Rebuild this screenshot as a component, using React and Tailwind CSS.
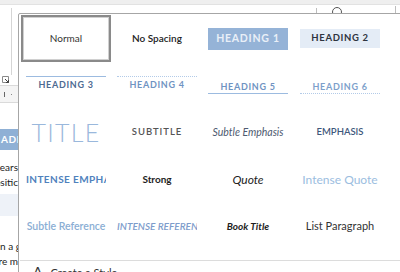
import React from 'react';

const font = { fontFamily: 'Lato, "Open Sans", sans-serif' };

function Cell({ children, className = '' }) {
  return (
    <div className={`h-[47px] flex items-center justify-center overflow-hidden ${className}`}>
      {children}
    </div>
  );
}

export default function App() {
  return (
    <div className="relative w-[400px] h-[272px] overflow-hidden bg-white text-[#333]" style={font}>
      {/* document behind the gallery */}
      <div className="flex flex-col w-full">
        <div className="h-[5px] bg-[#efefef] border-b border-[#e2e2e2]" />
        <div className="h-[80px] relative w-[18px]">
          <div className="absolute left-[11px] top-[3px] h-[67px] w-px bg-[#d5d5d5]" />
          <svg className="absolute left-[2px] top-[71px]" width="8" height="8" viewBox="0 0 8 8">
            <path d="M0.5 0.5h6v6h-6z" fill="none" stroke="#8a8a8a" strokeWidth="1" />
            <path d="M3 3l3.5 3.5M4 6.5h2.5V4" fill="none" stroke="#444" strokeWidth="1" />
          </svg>
        </div>
        <div className="h-[18px] w-[18px] border-y border-[#dadada] bg-[#f4f4f4] flex items-center gap-[6px] pl-[4px]">
          <div className="w-px h-[5px] bg-[#666]" />
          <div className="w-px h-px bg-[#888]" />
        </div>
        <div className="w-[18px] overflow-hidden text-[10px] leading-[15px] text-[#222] whitespace-nowrap">
          <div className="h-[26px]" />
          <div className="h-[21px] bg-[#8fb0d5] text-white font-bold tracking-wider flex items-center pl-[1px]">ADI</div>
          <div className="h-[10px]" />
          <div className="flex justify-end">years</div>
          <div className="flex justify-end">positic</div>
          <div className="h-[4px]" />
          <div className="h-[22px] bg-[#eef2f8]" />
          <div className="h-[23px]" />
          <div>n a g</div>
          <div className="flex justify-end">are m</div>
        </div>
      </div>

      {/* ribbon bits above the gallery */}
      <div className="absolute left-[316px] top-[8px] w-px h-[5px] bg-[#bdbdbd]" />
      <div className="absolute left-[332px] top-[7px] w-[10px] h-[10px] rounded-full border border-[#555]" />
      <div className="absolute left-[395px] top-[6px] w-px h-[7px] bg-[#bdbdbd]" />

      {/* styles gallery */}
      <div className="absolute left-[18px] top-[13px] w-[400px] h-[270px] bg-white border border-[#a6a6a6] rounded-tl-[2px] pl-px pt-px">
        <div className="grid grid-cols-[92px_90px_92px_92px] w-[366px]">
          <Cell>
            <div className="w-[90px] h-[47px] border-2 border-[#8a8a8a] shadow-[inset_0_0_0_1px_#d0d0d0] flex items-center justify-center text-[10px] text-[#333]">Normal</div>
          </Cell>
          <Cell><span className="text-[10px] font-semibold text-[#222]">No Spacing</span></Cell>
          <Cell>
            <div className="w-[80px] h-[22px] bg-[#95b3d7] flex items-center justify-center text-[10.5px] font-bold tracking-[0.07em] text-[#e9eff7]">HEADING 1</div>
          </Cell>
          <Cell>
            <div className="w-[80px] h-[19px] bg-[#e4ecf6] flex items-center justify-center text-[9.5px] font-bold tracking-[0.07em] text-[#2e3440]">HEADING 2</div>
          </Cell>

          <Cell>
            <div className="w-[80px] border-t border-[#9cbbe0] pt-[1px] text-center text-[9px] font-bold tracking-[0.08em] text-[#4d6a91] mt-[-4px]">HEADING 3</div>
          </Cell>
          <Cell>
            <div className="w-[80px] border-t border-dotted border-[#b3cbe8] pt-[1px] text-center text-[9px] font-bold tracking-[0.08em] text-[#6f93c2] mt-[-4px]">HEADING 4</div>
          </Cell>
          <Cell>
            <div className="w-[80px] border-b border-[#9cbbe0] pb-0 text-center text-[9px] font-bold tracking-[0.08em] text-[#6f93c2] mt-[3px]">HEADING 5</div>
          </Cell>
          <Cell>
            <div className="w-[80px] border-b border-dotted border-[#b3cbe8] pb-0 text-center text-[9px] font-bold tracking-[0.08em] text-[#7d9fcb] mt-[3px]">HEADING 6</div>
          </Cell>

          <Cell><span className="text-[25px] font-light tracking-[0.05em] text-[#9ab8dc] leading-none">TITLE</span></Cell>
          <Cell><span className="text-[9.5px] font-semibold tracking-[0.1em] text-[#555]">SUBTITLE</span></Cell>
          <Cell><span className="text-[10.5px] italic text-[#4e5a70]">Subtle Emphasis</span></Cell>
          <Cell><span className="text-[9.5px] font-semibold text-[#3f587c]">EMPHASIS</span></Cell>

          <Cell>
            <div className="w-[80px] overflow-hidden whitespace-nowrap text-[10px] font-bold tracking-[0.04em] text-[#4f81bd]">INTENSE EMPHASIS</div>
          </Cell>
          <Cell><span className="text-[10px] font-bold text-[#1e1e1e]">Strong</span></Cell>
          <Cell><span className="text-[12px] italic text-[#222]">Quote</span></Cell>
          <Cell><span className="text-[12px] text-[#9bbde0]">Intense Quote</span></Cell>

          <Cell><span className="text-[10.5px] font-semibold text-[#8aaed4] whitespace-nowrap">Subtle Reference</span></Cell>
          <Cell>
            <div className="w-[80px] overflow-hidden whitespace-nowrap text-[10px] italic font-semibold text-[#7d9ccb]">INTENSE REFERENCE</div>
          </Cell>
          <Cell><span className="text-[10px] italic font-bold text-[#1e1e1e]">Book Title</span></Cell>
          <Cell><span className="text-[11px] text-[#333]">List Paragraph</span></Cell>
        </div>
        <div className="mt-[10px] border-t border-[#dcdcdc] flex items-start gap-[8px] pl-[13px] pt-[4px]">
          <span className="text-[14px] leading-none text-[#333]">A</span>
          <span className="text-[11px] leading-none text-[#333] mt-[2px]">Create a Style</span>
        </div>
      </div>
    </div>
  );
}
